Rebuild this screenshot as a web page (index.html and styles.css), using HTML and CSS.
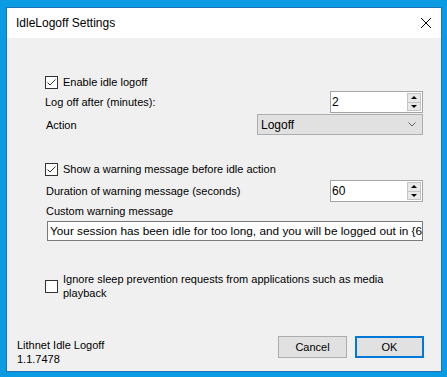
FILE: index.html
```html
<html>
<head>
<link rel="stylesheet" href="styles.css">
</head>
<body>
<div class="window">
  <div class="titlebar">
    <span class="title">IdleLogoff Settings</span>
    <svg class="close" width="10" height="10" viewBox="0 0 10 10"><path d="M0 0 L10 10 M10 0 L0 10" stroke="#000" stroke-width="1" fill="none"/></svg>
  </div>

  <div class="content">
    <div class="row check-row r-enable">
      <span class="check"><svg width="11" height="11" viewBox="0 0 11 11"><path d="M1.5 5.5 L4 8 L9.5 2.5" stroke="#333" stroke-width="1" fill="none"/></svg></span>
      <span>Enable idle logoff</span>
    </div>

    <div class="row r-minutes">
      <span class="label label-tight">Log off after (minutes):</span>
      <div class="numeric">
        <span class="num-value">2</span>
        <div class="spin">
          <span class="spin-btn"><i class="tri-up"></i></span>
          <span class="spin-btn"><i class="tri-down"></i></span>
        </div>
      </div>
    </div>

    <div class="row r-action">
      <span class="label">Action</span>
      <div class="combo">
        <span>Logoff</span>
        <svg class="chevron" width="8" height="5" viewBox="0 0 8 5"><path d="M0.5 0.5 L4 4 L7.5 0.5" stroke="#606060" stroke-width="1" fill="none"/></svg>
      </div>
    </div>

    <div class="row check-row r-warn">
      <span class="check"><svg width="11" height="11" viewBox="0 0 11 11"><path d="M1.5 5.5 L4 8 L9.5 2.5" stroke="#333" stroke-width="1" fill="none"/></svg></span>
      <span>Show a warning message before idle action</span>
    </div>

    <div class="row r-duration">
      <span class="label">Duration of warning message (seconds)</span>
      <div class="numeric">
        <span class="num-value">60</span>
        <div class="spin">
          <span class="spin-btn"><i class="tri-up"></i></span>
          <span class="spin-btn"><i class="tri-down"></i></span>
        </div>
      </div>
    </div>

    <div class="row r-custom">
      <span class="label">Custom warning message</span>
    </div>

    <div class="row r-text">
      <div class="textbox">Your session has been idle for too long, and you will be logged out in {60} seconds</div>
    </div>

    <div class="row check-row r-sleep">
      <span class="check"></span>
      <span class="two-line">Ignore sleep prevention requests from applications such as media<br>playback</span>
    </div>

    <div class="footer">
      <div class="about">
        <div>Lithnet Idle Logoff</div>
        <div>1.1.7478</div>
      </div>
      <div class="buttons">
        <span class="btn">Cancel</span>
        <span class="btn btn-default">OK</span>
      </div>
    </div>
  </div>
</div>
</body>
</html>
```

FILE: styles.css
```css
body {
  margin: 0;
  background: #0b9be2;
  font: 11px "Liberation Sans", Arial, sans-serif;
  color: #000;
}

.window {
  margin: 7px 0 0 6px;
  width: 436px;
  height: 365px;
  box-sizing: border-box;
  border: 1px solid #1f72b8;
  background: #f0f0f0;
  display: flex;
  flex-direction: column;
}

.titlebar {
  height: 30px;
  background: #fff;
  display: flex;
  align-items: center;
  padding-left: 9px;
  font-size: 12px;
}

.title {
  flex: 1;
}

.close {
  margin-right: 10px;
}

.content {
  flex: 1;
  padding: 0 18px 0 38px;
  display: flex;
  flex-direction: column;
}

.row {
  display: flex;
  align-items: center;
}

.check {
  width: 13px;
  height: 13px;
  box-sizing: border-box;
  border: 1px solid #333;
  background: #fff;
  margin-right: 5px;
  display: flex;
}

.r-enable { margin-top: 35px; height: 18px; }
.r-minutes { margin-top: 0; height: 22px; }
.r-action { margin-top: 1px; height: 21px; }
.r-warn { margin-top: 25px; height: 18px; }
.r-duration { margin-top: 2px; height: 22px; }
.r-custom { margin-top: 2px; height: 14px; }
.r-text { margin-top: 3px; height: 20px; }
.r-sleep { margin-top: 31px; height: 28px; }

.label {
  margin-left: 1px;
}

.label-tight {
  margin-left: 0;
}

.numeric {
  margin-left: auto;
  width: 93px;
  height: 22px;
  box-sizing: border-box;
  border: 1px solid #a5a5a5;
  background: #fff;
  display: flex;
  align-items: center;
}

.num-value {
  flex: 1;
  padding-left: 1px;
  font-size: 12px;
}

.spin {
  width: 14px;
  height: 18px;
  margin: 0 1px;
  display: flex;
  flex-direction: column;
}

.spin-btn {
  flex: 1;
  box-sizing: border-box;
  border: 1px solid #c4c4c4;
  background: #e8e8e8;
  display: flex;
  align-items: center;
  justify-content: center;
}

.spin-btn + .spin-btn {
  border-top: none;
}

.tri-up {
  width: 0;
  height: 0;
  border-left: 3px solid transparent;
  border-right: 3px solid transparent;
  border-bottom: 3px solid #000;
}

.tri-down {
  width: 0;
  height: 0;
  border-left: 3px solid transparent;
  border-right: 3px solid transparent;
  border-top: 3px solid #000;
}

.combo {
  margin-left: auto;
  width: 166px;
  height: 21px;
  box-sizing: border-box;
  border: 1px solid #adadad;
  background: #e1e1e1;
  display: flex;
  align-items: center;
  padding: 0 6px 0 3px;
  font-size: 12px;
}

.combo span {
  flex: 1;
}

.textbox {
  margin-left: 2px;
  width: 376px;
  height: 20px;
  box-sizing: border-box;
  border: 1px solid #7a7a7a;
  background: #fff;
  padding: 2px 0 0 2px;
  white-space: nowrap;
  overflow: hidden;
  font-size: 11.8px;
}

.two-line {
  line-height: 14px;
}

.footer {
  margin: 36px -1px 0 -28px;
  display: flex;
  align-items: flex-start;
}

.about {
  margin-top: 2px;
  line-height: 14px;
}

.buttons {
  margin-left: auto;
  display: flex;
  gap: 8px;
}

.btn {
  width: 69px;
  height: 22px;
  box-sizing: border-box;
  border: 1px solid #adadad;
  background: #e1e1e1;
  display: flex;
  align-items: center;
  justify-content: center;
}

.btn-default {
  border: 2px solid #0078d7;
}
```
